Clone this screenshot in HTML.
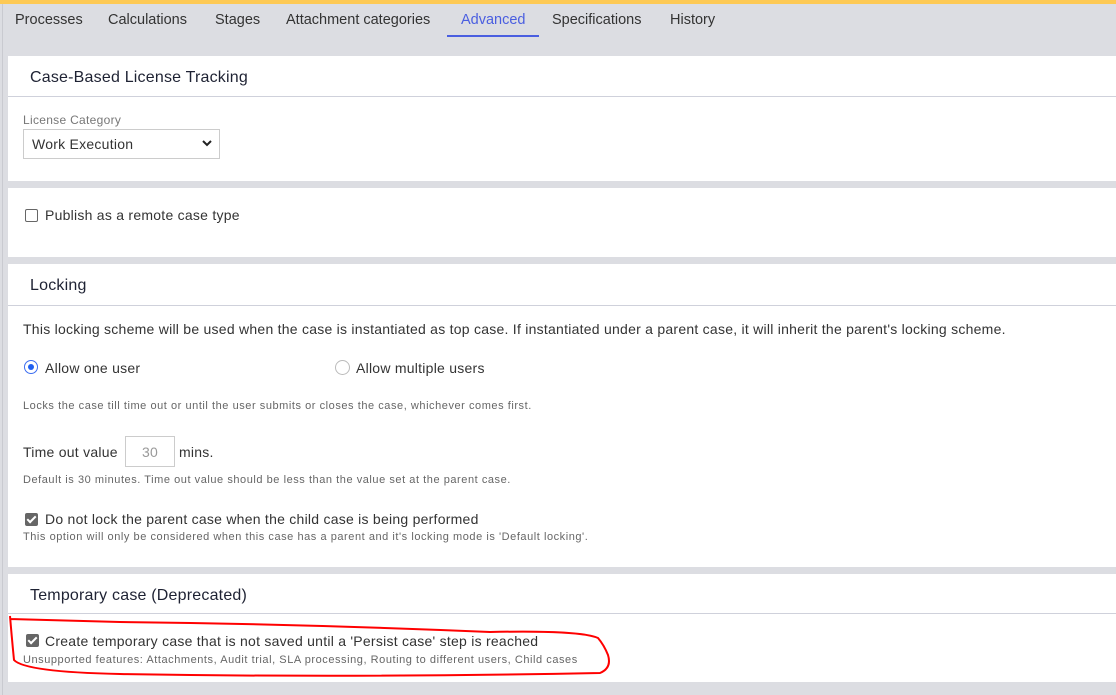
<!DOCTYPE html>
<html><head><style>
body{margin:0;width:1116px;height:695px;background:#dcdde2;font-family:"Liberation Sans",sans-serif;position:relative;overflow:hidden;color:#2b2b2b}
.top{position:absolute;left:0;top:0;width:1116px;height:4px;background:#fdc955}
.lb{position:absolute;left:2px;top:4px;width:1px;height:691px;background:#c9cad0}
.tab{position:absolute;top:12px;font-size:14.5px;color:#333}
.tab.act{color:#4a5ee0}
.ul{position:absolute;left:447px;top:35px;width:92px;height:2px;background:#4a5ee0}
.p{position:absolute;left:8px;width:1108px;background:#fff}
.h{position:absolute;left:22px;font-size:16px;color:#1e2233;letter-spacing:.2px}
.d{position:absolute;left:0;width:1108px;height:1px;background:#cfd1db}
.t{position:absolute;font-size:14px;color:#333;white-space:nowrap;letter-spacing:.25px}
.s{position:absolute;font-size:11px;color:#666;white-space:nowrap;letter-spacing:.55px}
.cb{position:absolute;width:11px;height:11px;border:1px solid #666;border-radius:2px;background:#fff}
.cb.on{background:#666;border-color:#666}
.cb.on::after{content:"";position:absolute;left:3px;top:0px;width:3px;height:7px;border:solid #fff;border-width:0 2px 2px 0;transform:rotate(45deg)}
</style></head><body>
<div class="top"></div><div class="lb"></div>
<div class="tab" style="left:15px">Processes</div>
<div class="tab" style="left:108px">Calculations</div>
<div class="tab" style="left:215px">Stages</div>
<div class="tab" style="left:286px">Attachment categories</div>
<div class="tab act" style="left:461px">Advanced</div>
<div class="tab" style="left:552px">Specifications</div>
<div class="tab" style="left:670px">History</div>
<div class="ul"></div>

<div class="p" style="top:56px;height:125px">
 <div class="h" style="top:13px">Case-Based License Tracking</div>
 <div class="d" style="top:40px"></div>
 <div class="s" style="left:15px;top:57px;font-size:12px;color:#777;letter-spacing:.3px">License Category</div>
 <div style="position:absolute;left:15px;top:73px;width:195px;height:28px;border:1px solid #ccc"></div>
 <div class="t" style="left:24px;top:80px">Work Execution</div>
 <svg style="position:absolute;left:194px;top:84px" width="10" height="7"><path d="M1 1L5 5L9 1" fill="none" stroke="#222" stroke-width="2"/></svg>
</div>

<div class="p" style="top:188px;height:69px">
 <div class="cb" style="left:17px;top:21px"></div>
 <div class="t" style="left:37px;top:19px">Publish as a remote case type</div>
</div>

<div class="p" style="top:264px;height:303px">
 <div class="h" style="top:13px">Locking</div>
 <div class="d" style="top:41px"></div>
 <div class="t" style="left:15px;top:57px">This locking scheme will be used when the case is instantiated as top case. If instantiated under a parent case, it will inherit the parent's locking scheme.</div>
 <div style="position:absolute;left:16px;top:96px;width:12px;height:12px;border:1px solid #3d6ef0;border-radius:50%"><div style="position:absolute;left:3px;top:3px;width:6px;height:6px;border-radius:50%;background:#1f5ff0"></div></div>
 <div class="t" style="left:37px;top:96px">Allow one user</div>
 <div style="position:absolute;left:327px;top:96px;width:13px;height:13px;border:1px solid #bbb;border-radius:50%"></div>
 <div class="t" style="left:348px;top:96px">Allow multiple users</div>
 <div class="s" style="left:15px;top:136px">Locks the case till time out or until the user submits or closes the case, whichever comes first.</div>
 <div class="t" style="left:15px;top:180px">Time out value</div>
 <div style="position:absolute;left:117px;top:172px;width:48px;height:29px;border:1px solid #ccc"></div>
 <div class="t" style="left:134px;top:180px;color:#999">30</div>
 <div class="t" style="left:171px;top:180px">mins.</div>
 <div class="s" style="left:15px;top:210px">Default is 30 minutes. Time out value should be less than the value set at the parent case.</div>
 <div class="cb on" style="left:17px;top:249px"></div>
 <div class="t" style="left:37px;top:247px">Do not lock the parent case when the child case is being performed</div>
 <div class="s" style="left:15px;top:267px">This option will only be considered when this case has a parent and it's locking mode is 'Default locking'.</div>
</div>

<div class="p" style="top:574px;height:108px">
 <div class="h" style="top:13px">Temporary case (Deprecated)</div>
 <div class="d" style="top:39px"></div>
 <div class="cb on" style="left:18px;top:60px"></div>
 <div class="t" style="left:37px;top:59px">Create temporary case that is not saved until a 'Persist case' step is reached</div>
 <div class="s" style="left:15px;top:80px">Unsupported features: Attachments, Audit trial, SLA processing, Routing to different users, Child cases</div>
</div>

<svg style="position:absolute;left:0;top:0" width="1116" height="695">
<path d="M10 616 Q12 640 14 660 Q25 672 120 674 Q350 678 600 673 Q612 668 608 655 Q604 645 598 638 Q580 630 490 632 Q300 624 120 622 Q40 620 10 619" fill="none" stroke="#f00" stroke-width="2"/>
</svg>
</body></html>
